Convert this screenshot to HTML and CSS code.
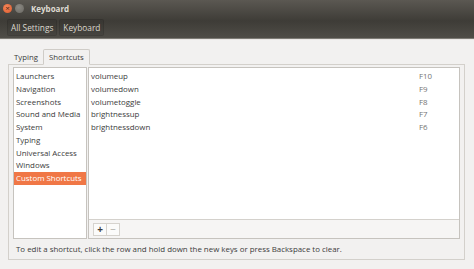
FILE: index.html
```html
<!DOCTYPE html>
<html lang="en">
<head>
  <meta charset="UTF-8" />
  <title>Keyboard</title>
  <link rel="stylesheet" href="styles.css">
</head>
<body>
  <div class="window">
    <header class="header">
      <div class="titlebar">
        <span class="wbtn close">&#215;</span>
        <span class="wbtn min"></span>
        <span class="title">Keyboard</span>
      </div>
      <div class="toolbar">
        <span class="crumb">All Settings</span>
        <span class="crumb">Keyboard</span>
      </div>
    </header>

    <main class="content">
      <div class="tabs">
        <span class="tab">Typing</span>
        <span class="tab active">Shortcuts</span>
      </div>
      <div class="frame">
        <div class="lists">
          <ul class="sections">
            <li>Launchers</li>
            <li>Navigation</li>
            <li>Screenshots</li>
            <li>Sound and Media</li>
            <li>System</li>
            <li>Typing</li>
            <li>Universal Access</li>
            <li>Windows</li>
            <li class="selected">Custom Shortcuts</li>
          </ul>
          <div class="shortcuts">
            <ul class="rows">
              <li><span class="name">volumeup</span><span class="key">F10</span></li>
              <li><span class="name">volumedown</span><span class="key">F9</span></li>
              <li><span class="name">volumetoggle</span><span class="key">F8</span></li>
              <li><span class="name">brightnessup</span><span class="key">F7</span></li>
              <li><span class="name">brightnessdown</span><span class="key">F6</span></li>
            </ul>
            <div class="list-tools">
              <span class="tool add">+</span><span class="tool remove">&#8722;</span>
            </div>
          </div>
        </div>
        <p class="hint">To edit a shortcut, click the row and hold down the new keys or press Backspace to clear.</p>
      </div>
    </main>
  </div>
</body>
</html>
```

FILE: styles.css
```css
html, body {
  margin: 0;
  height: 100%;
  background: #f2f1f0;
  font-family: 'Open Sans', 'Noto Sans', sans-serif;
  font-size: 7.9px;
  color: #3c3c3c;
}
.window {
  width: 474px;
  height: 269px;
  display: flex;
  flex-direction: column;
}
.header {
  height: 38px;
  background: linear-gradient(#5b5852, #3e3c37 55%, #4f4d47);
  border-bottom: 1px solid #7c7a74;
}
.titlebar {
  height: 16px;
  display: flex;
  align-items: center;
  padding-left: 3px;
}
.wbtn {
  width: 9px;
  height: 9px;
  border-radius: 50%;
  margin-right: 3px;
  display: flex;
  align-items: center;
  justify-content: center;
  font-size: 8px;
  line-height: 1;
  color: #4a2515;
}
.wbtn.close {
  background: radial-gradient(circle at 40% 35%, #f4875a, #df5a2c);
}
.wbtn.min {
  background: radial-gradient(circle at 40% 35%, #8c8a84, #6a6862);
}
.title {
  margin-left: 4px;
  font-weight: 700;
  font-size: 8px;
  color: #dfdbd2;
}
.toolbar {
  height: 22px;
  display: flex;
  align-items: center;
  padding-left: 7px;
  gap: 2px;
}
.crumb {
  padding: 2px 3px;
  font-size: 8.3px;
  color: #dcd8cf;
  background: rgba(0,0,0,0.07);
  border: 1px solid rgba(0,0,0,0.1);
  border-radius: 2px;
}
.content {
  flex: 1;
  padding: 9px 9px 0 8px;
  border-top: 1px solid #e9e7e4;
}
.tabs {
  display: flex;
  height: 16px;
  margin-bottom: -1px;
  position: relative;
  font-size: 7.8px;
}
.tab {
  padding: 0 4px 0 6px;
  line-height: 16px;
}
.tab.active {
  background: #f2f1f0;
  border: 1px solid #cfccc7;
  border-bottom-color: #f2f1f0;
  border-radius: 2px 2px 0 0;
  line-height: 15px;
  padding: 0 5px;
  margin-left: 1px;
}
.frame {
  border: 1px solid #d3d0cb;
  padding: 2px 4px 4px 4px;
}
.lists {
  display: flex;
  gap: 1px;
  height: 172px;
}
ul {
  list-style: none;
  margin: 0;
  padding: 2px 0 0;
}
li {
  height: 12.75px;
  line-height: 12.75px;
  white-space: nowrap;
}
.sections {
  width: 72px;
  background: #fff;
  border: 1px solid #c6c3be;
}
.sections li {
  padding-left: 2px;
}
.sections li.selected {
  background: #f07746;
  color: #fff;
}
.shortcuts {
  flex: 1;
  display: flex;
  flex-direction: column;
  border: 1px solid #c6c3be;
}
.rows {
  flex: 1;
  background: #fff;
  border-bottom: 1px solid #d4d1cc;
}
.rows li {
  display: grid;
  grid-template-columns: 1fr 40px;
  padding-left: 2px;
}
.key {
  color: #747474;
}
.list-tools {
  height: 18px;
  display: flex;
  align-items: center;
  padding-left: 4px;
  background: #f6f5f4;
}
.tool {
  width: 12px;
  height: 11px;
  display: flex;
  align-items: center;
  justify-content: center;
  border: 1px solid #d6d3ce;
  background: #fbfbfa;
  font-size: 10px;
  font-weight: 700;
  color: #3c3c3c;
}
.tool.remove {
  color: #a9a7a3;
  font-weight: 400;
  border-left: none;
}
.hint {
  margin: 4px 0 0;
  padding-left: 3px;
  line-height: 12px;
  font-size: 7.9px;
}
```
